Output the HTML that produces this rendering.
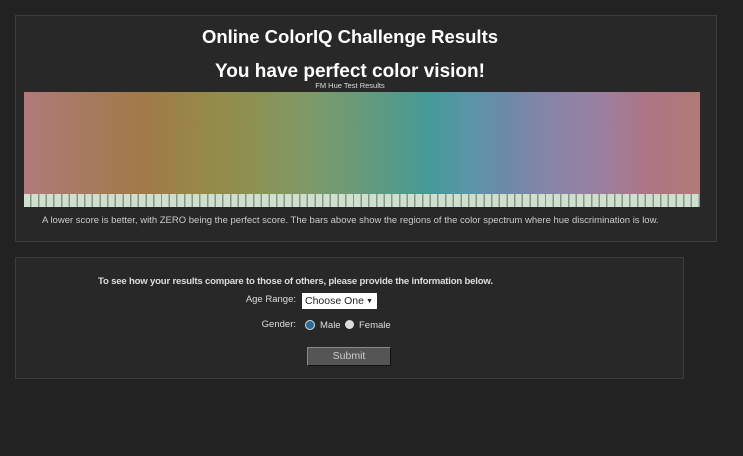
<!DOCTYPE html>
<html><head><style>
body{margin:0;background:#222;width:743px;height:456px;position:relative;font-family:"Liberation Sans",Arial,sans-serif;overflow:hidden}
.box{position:absolute;background:#282828;border:1px solid #3c3c3c;box-sizing:border-box}
.t{position:absolute;left:0;width:668px;text-align:center;color:#fff;font-weight:bold;white-space:nowrap}
#spec{position:absolute;left:24px;top:92px;width:676px;height:115px;
background:linear-gradient(90deg,#b07a7a 0%,#a87a62 8%,#a07a48 18%,#968a48 27%,#8e9050 33%,#7f9a68 42%,#609a80 52%,#459a98 60%,#5a95a8 66%,#7088a8 72%,#8585a8 77%,#9a80a0 85%,#ad7585 92%,#b07a76 100%)}
#sq{position:absolute;left:24px;top:194px;width:676px;height:13px;
background:repeating-linear-gradient(90deg,#cfe0cf 0,#cfe0cf 6.2px,#8a958a 6.2px,#8a958a 7.68px)}
</style></head><body>
<div class="box" style="left:15px;top:15px;width:702px;height:227px">
<div class="t" style="top:10px;font-size:18.5px">Online ColorIQ Challenge Results</div>
<div class="t" style="top:45px;font-size:19px">You have perfect color vision!</div>
<div class="t" style="top:65px;font-size:7.5px;font-weight:normal;color:#ddd">FM Hue Test Results</div>
<div style="position:absolute;left:26px;top:199px;font-size:9.5px;color:#ccc;white-space:nowrap">A lower score is better, with ZERO being the perfect score. The bars above show the regions of the color spectrum where hue discrimination is low.</div>
</div>
<div id="spec"></div><div id="sq"></div>
<div class="box" style="left:15px;top:257px;width:669px;height:122px"></div>
<div style="position:absolute;left:98px;top:276px;font-size:9.6px;font-weight:bold;color:#ddd;white-space:nowrap;letter-spacing:-0.2px">To see how your results compare to those of others, please provide the information below.</div>
<div style="position:absolute;left:200px;width:96px;text-align:right;top:294px;font-size:9.5px;color:#ddd">Age Range:</div>
<div style="position:absolute;left:302px;top:293px;width:75px;height:16px;background:#fff;font-size:10.5px;color:#222;line-height:17px;padding-left:3px;box-sizing:border-box">Choose One <span style="position:absolute;right:4px;top:0;font-size:7px">&#9660;</span></div>
<div style="position:absolute;left:200px;width:96px;text-align:right;top:319px;font-size:9.5px;color:#ddd">Gender:</div>
<div style="position:absolute;left:305px;top:320px;width:8px;height:8px;border-radius:50%;background:#2a6a9a;border:1px solid #ddd"></div>
<div style="position:absolute;left:320px;top:320px;font-size:9.5px;color:#ddd">Male</div>
<div style="position:absolute;left:345px;top:320px;width:9px;height:9px;border-radius:50%;background:#ddd"></div>
<div style="position:absolute;left:359px;top:320px;font-size:9.5px;color:#ddd">Female</div>
<div style="position:absolute;left:307px;top:347px;width:84px;height:19px;background:#555;border:1px solid #888;border-right-color:#111;border-bottom-color:#111;box-sizing:border-box;color:#ccc;font-size:10.5px;text-align:center;line-height:17px">Submit</div>
</body></html>
